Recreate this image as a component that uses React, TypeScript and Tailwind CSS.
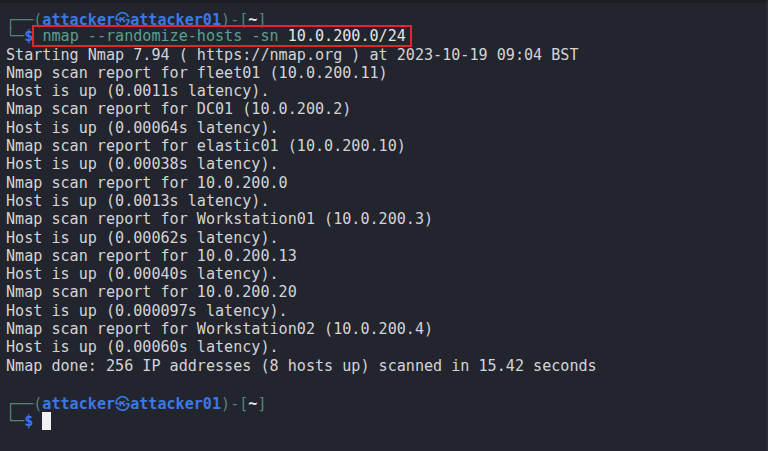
import React from "react";

const out = [
  "Starting Nmap 7.94 ( https://nmap.org ) at 2023-10-19 09:04 BST",
  "Nmap scan report for fleet01 (10.0.200.11)",
  "Host is up (0.0011s latency).",
  "Nmap scan report for DC01 (10.0.200.2)",
  "Host is up (0.00064s latency).",
  "Nmap scan report for elastic01 (10.0.200.10)",
  "Host is up (0.00038s latency).",
  "Nmap scan report for 10.0.200.0",
  "Host is up (0.0013s latency).",
  "Nmap scan report for Workstation01 (10.0.200.3)",
  "Host is up (0.00062s latency).",
  "Nmap scan report for 10.0.200.13",
  "Host is up (0.00040s latency).",
  "Nmap scan report for 10.0.200.20",
  "Host is up (0.000097s latency).",
  "Nmap scan report for Workstation02 (10.0.200.4)",
  "Host is up (0.00060s latency).",
  "Nmap done: 256 IP addresses (8 hosts up) scanned in 15.42 seconds",
];

function PromptTop() {
  return (
    <div className="h-[18.3px] whitespace-pre">
      <span className="text-[#55837a]">┌──(</span>
      <span className="text-[#3b78e6] font-bold">attacker</span>
      <span className="text-[#3b78e6] font-bold" style={{ fontFamily: '"Noto Sans CJK SC", "DejaVu Sans Mono", monospace' }}>㉿</span>
      <span className="text-[#3b78e6] font-bold">attacker01</span>
      <span className="text-[#55837a]">)-[</span>
      <span className="text-[#e6e6e6] font-bold">~</span>
      <span className="text-[#55837a]">]</span>
    </div>
  );
}

export default function App() {
  return (
    <div
      className="w-[768px] h-[451px] overflow-hidden bg-[#23252e] border-t-[3px] border-t-[#1d1f26] border-r-2 border-r-[#2c2e37] pl-[6px] pt-[6px] text-[15.1px] leading-[18.3px] text-[#d4d4d6]"
      style={{ fontFamily: '"DejaVu Sans Mono", "Liberation Mono", monospace' }}
    >
      <PromptTop />
      <div className="h-[18.3px] whitespace-pre">
        <span className="text-[#55837a]">└─</span>
        <span className="text-[#3b78e6] font-bold">$</span>
        <span> </span>
        <span className="relative">
          <span className="absolute -left-[10px] -right-[6px] -top-[2px] -bottom-[2px] border-2 border-[#e0262c]" />
          <span className="text-[#5a9f94]">nmap --randomize-hosts -sn </span>
          <span className="text-[#e6e6e6]">10.0.200.0/24</span>
        </span>
      </div>
      {out.map((l, i) => (
        <div key={i} className="h-[18.3px] whitespace-pre">
          {l}
        </div>
      ))}
      <div className="h-[18.3px]" />
      <PromptTop />
      <div className="h-[18.3px] whitespace-pre flex items-center">
        <span className="text-[#55837a]">└─</span>
        <span className="text-[#3b78e6] font-bold">$</span>
        <span> </span>
        <span className="inline-block w-[9px] h-[18px] bg-[#f2f2f2]" />
      </div>
    </div>
  );
}
